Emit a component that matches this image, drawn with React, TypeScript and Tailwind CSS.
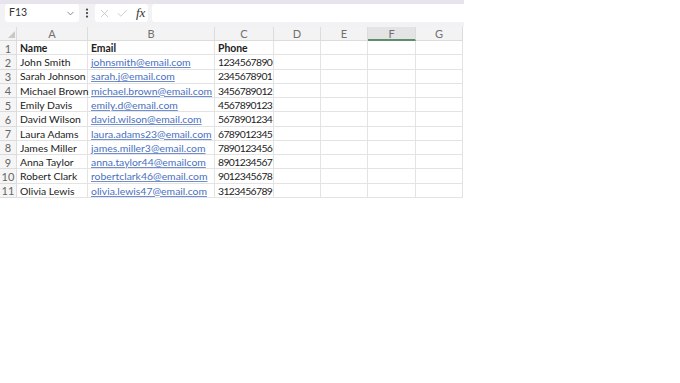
import { Check, ChevronDown, EllipsisVertical, X } from "lucide-react";

const rows = [
  ["Name", "Email", "Phone"],
  ["John Smith", "johnsmith@email.com", "1234567890"],
  ["Sarah Johnson", "sarah.j@email.com", "2345678901"],
  ["Michael Brown", "michael.brown@email.com", "3456789012"],
  ["Emily Davis", "emily.d@email.com", "4567890123"],
  ["David Wilson", "david.wilson@email.com", "5678901234"],
  ["Laura Adams", "laura.adams23@email.com", "6789012345"],
  ["James Miller", "james.miller3@email.com", "7890123456"],
  ["Anna Taylor", "anna.taylor44@emailcom", "8901234567"],
  ["Robert Clark", "robertclark46@email.com", "9012345678"],
  ["Olivia Lewis", "olivia.lewis47@email.com", "3123456789"],
];

const letters = ["A", "B", "C", "D", "E", "F", "G"];

export default function App() {
  return (
    <div
      className="w-[680px] h-[383px] bg-white overflow-hidden text-[#222]"
      style={{ fontFamily: "Lato, 'Liberation Sans', sans-serif" }}
    >
      <div className="w-[464px]">
        {/* formula bar */}
        <div className="h-[27px] bg-[#f2f1f4] border-t-4 border-[#e7e4eb] flex items-start pl-[5px]">
          <div className="w-[74px] h-[18px] bg-white rounded-[3px] flex items-center justify-between pl-[4px] pr-[3px] text-[10.5px] text-[#333]">
            <span>F13</span>
            <ChevronDown size={11} strokeWidth={1.5} className="text-[#555]" />
          </div>
          <div className="w-[16px] h-[18px] flex items-center justify-center text-[#444]">
            <EllipsisVertical size={12} strokeWidth={2.5} />
          </div>
          <div className="w-[53px] h-[18px] bg-white rounded-[3px] flex items-center gap-[5px] pl-[3px] text-[#b4b4b4]">
            <X size={13} strokeWidth={1.2} />
            <Check size={13} strokeWidth={1.2} />
            <span
              className="italic text-[13px] text-[#333] ml-[2px]"
              style={{ fontFamily: "'Liberation Serif', serif" }}
            >
              fx
            </span>
          </div>
          <div className="flex-1 h-[18px] bg-white rounded-l-[3px] ml-[4px]" />
        </div>

        {/* grid */}
        <div className="grid grid-cols-[17px_71px_127px_59px_47px_47px_48px_47px] text-[10.4px]">
          <div className="h-[14px] bg-[#f3f3f3] border-r border-b border-[#dcdcdc] relative">
            <svg width="7" height="7" viewBox="0 0 7 7" className="absolute right-[1px] bottom-[2px]">
              <polygon points="7,0 7,7 0,7" fill="#c8c8c8" />
            </svg>
          </div>
          {letters.map((l) => (
            <div
              key={l}
              className={
                l === "F"
                  ? "h-[14px] bg-[#e4e4e4] border-r border-b-2 border-r-[#dcdcdc] border-b-[#5d8d6b] flex items-center justify-center text-[#707070] leading-none text-[11px]"
                  : "h-[14px] bg-[#f3f3f3] border-r border-b border-[#dcdcdc] flex items-center justify-center text-[#707070] leading-none text-[11px]"
              }
            >
              {l}
            </div>
          ))}
          {rows.map((r, i) => (
            <Row key={i} n={i + 1} cells={r} header={i === 0} />
          ))}
        </div>
      </div>
    </div>
  );
}

function Row({ n, cells, header }: { n: number; cells: string[]; header: boolean }) {
  const cell = "h-[14.27px] border-r border-b border-[#e3e3e3] flex items-center pl-[3px] pt-[1px] whitespace-nowrap overflow-visible leading-none";
  return (
    <>
      <div className="h-[14.27px] bg-[#f5f5f5] border-r border-b border-[#dcdcdc] flex items-center justify-center pt-[1px] text-[#666] leading-none text-[11px]">
        {n}
      </div>
      <div className={header ? cell + " font-bold" : cell}>{cells[0]}</div>
      <div className={header ? cell + " font-bold" : cell}>
        {header ? cells[1] : <span className="text-[#4a6fc0] underline decoration-[#6f8fd0] underline-offset-[1px]">{cells[1]}</span>}
      </div>
      <div className={header ? cell + " font-bold" : cell + " tracking-[-0.6px]"}>{cells[2]}</div>
      <div className={cell} />
      <div className={cell} />
      <div className={cell} />
      <div className={cell} />
    </>
  );
}
